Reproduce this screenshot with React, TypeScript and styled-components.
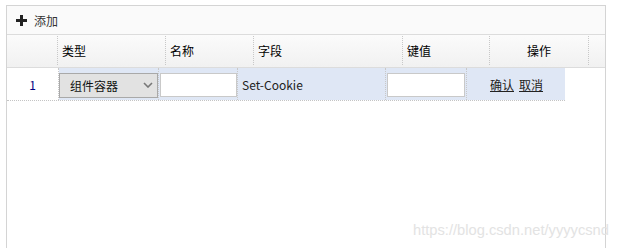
import styled, { createGlobalStyle } from "styled-components";

const GlobalStyle = createGlobalStyle`
	html, body {
		margin: 0;
		padding: 0;
		background: #fff;
	}
	body {
		font-family: "Microsoft YaHei", "Noto Sans CJK SC", sans-serif;
		font-size: 12px;
		color: #000;
	}
`;

const headerCols = [
	{ label: "", width: 51, align: "left" },
	{ label: "类型", width: 108, align: "left" },
	{ label: "名称", width: 88, align: "left" },
	{ label: "字段", width: 149, align: "left" },
	{ label: "键值", width: 87, align: "left" },
	{ label: "操作", width: 99, align: "center" },
];

const App = () => {
	return (
		<>
			<GlobalStyle />
			<Page>
				<Panel>
					<Toolbar>
						<AddButton>
							<svg width="11" height="11" viewBox="0 0 11 11">
								<rect x="4" y="0" width="3" height="11" fill="#222" />
								<rect x="0" y="4" width="11" height="3" fill="#222" />
							</svg>
							<span>添加</span>
						</AddButton>
					</Toolbar>
					<HeaderRow>
						{headerCols.map((c, i) => (
							<HeaderCell key={i} $width={c.width} $align={c.align}>
								{c.label}
							</HeaderCell>
						))}
						<HeaderFiller />
					</HeaderRow>
					<DataRow>
						<NumCell>1</NumCell>
						<Cell $width={99}>
							<Select>
								<span>组件容器</span>
								<SelectArrow>
									<svg width="10" height="6" viewBox="0 0 10 6">
										<path d="M1 1 L5 5 L9 1" stroke="#777" strokeWidth="1.6" fill="none" />
									</svg>
								</SelectArrow>
							</Select>
						</Cell>
						<Cell $width={78}>
							<TextInput $width={77} />
						</Cell>
						<Cell $width={143} $pad={4}>
							Set-Cookie
						</Cell>
						<Cell $width={80}>
							<TextInput $width={78} />
						</Cell>
						<Cell $width={98} $align="center">
							<Links>
								<Link>确认</Link>
								<Link>取消</Link>
							</Links>
						</Cell>
					</DataRow>
				</Panel>
				<Watermark>https://blog.csdn.net/yyyycsnd</Watermark>
			</Page>
		</>
	);
};

export default App;

const Page = styled.div`
	position: relative;
	width: 630px;
	height: 248px;
	overflow: hidden;
	padding: 5px 0 0 6px;
	box-sizing: border-box;
`;

const Panel = styled.div`
	width: 600px;
	height: 260px;
	border: 1px solid #d4d4d4;
	border-bottom: none;
	box-sizing: border-box;
`;

const Toolbar = styled.div`
	height: 28px;
	display: flex;
	align-items: center;
	padding-left: 9px;
	background: #fafafa;
	border-bottom: 1px solid #dcdcdc;
`;

const AddButton = styled.div`
	display: flex;
	align-items: center;
	gap: 7px;
	color: #333;
	cursor: pointer;

	span {
		font-size: 12px;
	}
`;

const HeaderRow = styled.div`
	display: flex;
	height: 32px;
	background: linear-gradient(#fbfbfb, #f1f1f1);
	border-bottom: 1px solid #dcdcdc;
`;

const HeaderCell = styled.div<{ $width: number; $align: string }>`
	width: ${(p) => p.$width}px;
	flex: none;
	display: flex;
	align-items: center;
	justify-content: ${(p) => (p.$align === "center" ? "center" : "flex-start")};
	padding-left: ${(p) => (p.$align === "center" ? 0 : 4)}px;
	box-sizing: border-box;
	border-right: 1px dotted #c8c8c8;
	margin: 1px 0 2px;
	color: #000;
`;

const HeaderFiller = styled.div`
	flex: 1;
`;

const DataRow = styled.div`
	display: flex;
	height: 32px;
	width: 558px;
	border-bottom: 1px dotted #c4c4c4;
`;

const NumCell = styled.div`
	width: 51px;
	flex: none;
	display: flex;
	align-items: center;
	justify-content: center;
	color: #000080;
	border-right: 1px dotted #c8c8c8;
	background: #fff;
`;

const Cell = styled.div<{ $width: number; $pad?: number; $align?: string }>`
	width: ${(p) => p.$width}px;
	flex: none;
	display: flex;
	align-items: center;
	justify-content: ${(p) => (p.$align === "center" ? "center" : "flex-start")};
	padding-left: ${(p) => p.$pad ?? 0}px;
	box-sizing: content-box;
	background: #dfe7f5;
	border-right: 1px dotted #c8c8c8;
	color: #222;
	font-size: 12px;
	&:last-child {
		border-right: none;
	}
`;

const Select = styled.div`
	width: 99px;
	height: 25px;
	box-sizing: border-box;
	display: flex;
	align-items: center;
	justify-content: space-between;
	background: #e2e2e2;
	border: 1px solid #a9a9a9;
	padding-left: 10px;
	color: #111;
	margin-top: 2px;
`;

const SelectArrow = styled.div`
	width: 19px;
	height: 100%;
	display: flex;
	align-items: center;
	justify-content: center;
`;

const TextInput = styled.div<{ $width: number }>`
	width: ${(p) => p.$width}px;
	height: 24px;
	box-sizing: border-box;
	background: #fff;
	border: 1px solid #c9c9c9;
	margin-left: 1px;
	margin-top: 2px;
`;

const Links = styled.div`
	display: flex;
	gap: 5px;
	margin-left: 1px;
`;

const Link = styled.span`
	text-decoration: underline;
	color: #222;
	cursor: pointer;
`;

const Watermark = styled.div`
	position: absolute;
	left: 413px;
	top: 222px;
	font-family: "Liberation Sans", Arial, sans-serif;
	font-size: 14.7px;
	color: #e3e3e3;
	white-space: nowrap;
`;
